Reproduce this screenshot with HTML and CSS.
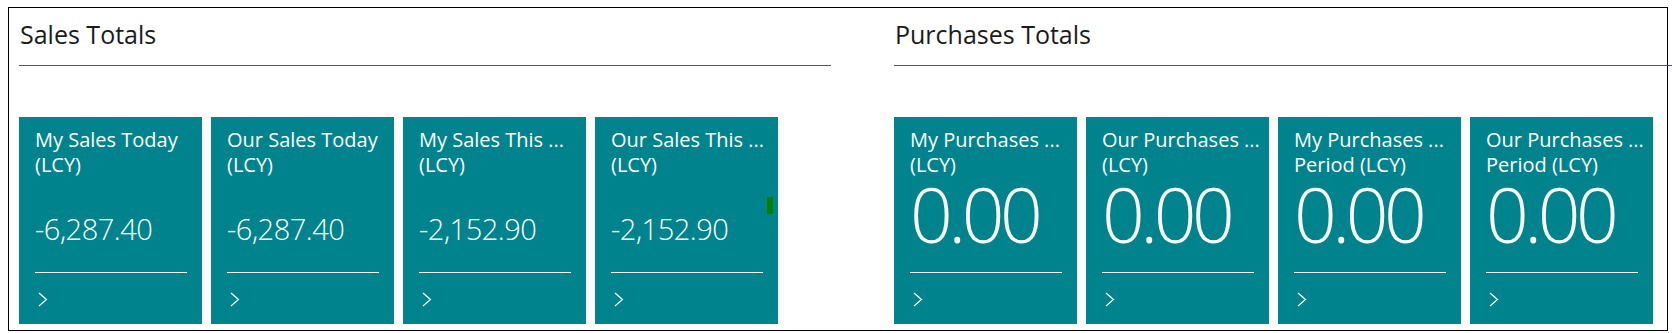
FILE: index.html
```html
<!DOCTYPE html>
<html lang="en">

<head>
    <meta charset="UTF-8">
    <meta name="viewport" content="width=device-width, initial-scale=1.0">
    <title>role-center-totals</title>
    <link rel="stylesheet" href="styles.css">
</head>

<body>

    <div class="panel">

        <!-- Sales cues -->
        <section class="group group-sales">
            <h2 class="group-title">Sales Totals</h2>
            <div class="tiles">
                <a class="tile" href="#">
                    <div class="tile-title"><span>My Sales Today</span><span>(LCY)</span></div>
                    <div class="tile-value">-6,287.40</div>
                    <div class="tile-foot"><svg class="chevron" viewBox="0 0 10 15"><path d="M1 1 L8.5 7.5 L1 14" /></svg></div>
                </a>
                <a class="tile" href="#">
                    <div class="tile-title"><span>Our Sales Today</span><span>(LCY)</span></div>
                    <div class="tile-value">-6,287.40</div>
                    <div class="tile-foot"><svg class="chevron" viewBox="0 0 10 15"><path d="M1 1 L8.5 7.5 L1 14" /></svg></div>
                </a>
                <a class="tile" href="#">
                    <div class="tile-title"><span>My Sales This ...</span><span>(LCY)</span></div>
                    <div class="tile-value">-2,152.90</div>
                    <div class="tile-foot"><svg class="chevron" viewBox="0 0 10 15"><path d="M1 1 L8.5 7.5 L1 14" /></svg></div>
                </a>
                <a class="tile" href="#">
                    <div class="tile-title"><span>Our Sales This ...</span><span>(LCY)</span></div>
                    <div class="tile-value">-2,152.90</div>
                    <div class="tile-foot"><svg class="chevron" viewBox="0 0 10 15"><path d="M1 1 L8.5 7.5 L1 14" /></svg></div>
                    <span class="indicator"></span>
                </a>
            </div>
        </section>

        <!-- Purchase cues -->
        <section class="group group-purchases">
            <h2 class="group-title">Purchases Totals</h2>
            <div class="tiles">
                <a class="tile" href="#">
                    <div class="tile-title"><span>My Purchases ...</span><span>(LCY)</span></div>
                    <div class="tile-value big">0.00</div>
                    <div class="tile-foot"><svg class="chevron" viewBox="0 0 10 15"><path d="M1 1 L8.5 7.5 L1 14" /></svg></div>
                </a>
                <a class="tile" href="#">
                    <div class="tile-title"><span>Our Purchases ...</span><span>(LCY)</span></div>
                    <div class="tile-value big">0.00</div>
                    <div class="tile-foot"><svg class="chevron" viewBox="0 0 10 15"><path d="M1 1 L8.5 7.5 L1 14" /></svg></div>
                </a>
                <a class="tile" href="#">
                    <div class="tile-title"><span>My Purchases ...</span><span>Period (LCY)</span></div>
                    <div class="tile-value big">0.00</div>
                    <div class="tile-foot"><svg class="chevron" viewBox="0 0 10 15"><path d="M1 1 L8.5 7.5 L1 14" /></svg></div>
                </a>
                <a class="tile" href="#">
                    <div class="tile-title"><span>Our Purchases ...</span><span>Period (LCY)</span></div>
                    <div class="tile-value big">0.00</div>
                    <div class="tile-foot"><svg class="chevron" viewBox="0 0 10 15"><path d="M1 1 L8.5 7.5 L1 14" /></svg></div>
                </a>
            </div>
        </section>

    </div>

</body>

</html>
```

FILE: styles.css
```css
body {
    font-family: "Open Sans", "Noto Sans", sans-serif;
    background-color: #fff;
    margin: 0;
    padding: 0;
}

.panel {
    margin: 7px 4px 0 8px;
    height: 322px;
    border: 1px solid #000;
    padding-left: 10px;
    display: flex;
    gap: 63px;
}

.group {
    flex-shrink: 0;
}

.group-sales {
    width: 812px;
}

.group-purchases {
    width: 778px;
}

.group-title {
    margin: 0;
    padding: 10px 0 0 1px;
    height: 47px;
    font-size: 25px;
    line-height: 32px;
    font-weight: 400;
    color: #1b1b1b;
    border-bottom: 1px solid #55565f;
}

.tiles {
    display: flex;
    gap: 9px;
    margin-top: 51px;
}

.tile {
    position: relative;
    box-sizing: border-box;
    width: 183px;
    height: 207px;
    padding: 0 15px 0 16px;
    background-color: #00838d;
    color: #fff;
    text-decoration: none;
    display: flex;
    flex-direction: column;
}

.tile-title {
    margin-top: 10px;
    font-size: 20px;
    line-height: 25px;
    white-space: nowrap;
    display: flex;
    flex-direction: column;
}

.tile-value {
    margin-top: auto;
    margin-bottom: 28px;
    font-size: 29px;
    line-height: 30px;
    font-weight: 300;
    letter-spacing: -0.5px;
    white-space: nowrap;
}

.tile-value.big {
    margin-bottom: 28px;
    font-size: 75px;
    line-height: 60px;
    letter-spacing: -4.5px;
}

.tile-foot {
    height: 51px;
    border-top: 1px solid #fff;
}

.chevron {
    display: block;
    width: 10px;
    height: 15px;
    margin: 19px 0 0 3px;
    fill: none;
    stroke: #fff;
    stroke-width: 1.2;
}

.indicator {
    position: absolute;
    top: 80px;
    right: 5px;
    width: 6px;
    height: 17px;
    background-color: #008000;
}
```
